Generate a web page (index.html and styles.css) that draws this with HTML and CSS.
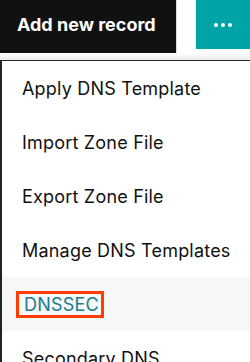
FILE: index.html
```html
<!DOCTYPE html>
<html lang="en">
<head>
    <meta charset="UTF-8">
    <meta name="viewport" content="width=device-width, initial-scale=1.0">
    <title>DNS Records</title>
    <link rel="stylesheet" href="styles.css">
</head>
<body>
    <div class="toolbar">
        <button class="btn-add">Add new record</button>
        <button class="btn-more" aria-label="More">
            <span class="dot"></span><span class="dot"></span><span class="dot"></span>
        </button>
    </div>
    <div class="toolbar-shadow"></div>
    <ul class="menu">
        <li class="menu-item">Apply DNS Template</li>
        <li class="menu-item">Import Zone File</li>
        <li class="menu-item">Export Zone File</li>
        <li class="menu-item">Manage DNS Templates</li>
        <li class="menu-item active"><span class="highlight">DNSSEC</span></li>
        <li class="menu-item">Secondary DNS</li>
    </ul>
</body>
</html>
```

FILE: styles.css
```css
body {
    font-family: Inter, 'Noto Sans', sans-serif;
    margin: 0;
    padding: 0;
    background-color: #fff;
    color: #111;
    overflow: hidden;
}
.toolbar {
    display: flex;
    align-items: flex-start;
    gap: 19px;
    height: 53px;
}
.btn-add {
    width: 177px;
    height: 53px;
    background-color: #111;
    color: #fff;
    border: none;
    border-right: 1px solid #ddd;
    font-family: inherit;
    font-size: 18px;
    font-weight: 700;
    text-align: left;
    padding: 0 0 4px 17px;
}
.btn-more {
    width: 54px;
    height: 49px;
    background-color: #00a4a6;
    border: none;
    display: flex;
    justify-content: center;
    align-items: center;
    gap: 3px;
    padding: 0;
}
.dot {
    width: 4px;
    height: 4px;
    border-radius: 50%;
    background-color: #fff;
}
.toolbar-shadow {
    height: 7px;
    background: linear-gradient(#fff, #ececec);
}
.menu {
    list-style: none;
    margin: 0;
    padding: 0;
    border-top: 1px solid #222;
    border-left: 2px solid #222;
    width: 300px;
}
.menu-item {
    height: 54px;
    display: flex;
    align-items: center;
    padding-left: 20px;
    font-size: 18px;
    letter-spacing: 0.2px;
    color: #111;
}
.menu-item.active {
    background-color: #f5f7f8;
}
.highlight {
    color: #1b7c8e;
    border: 3px solid #ff3d00;
    padding: 1px 2px 1px 5px;
    margin-left: -6px;
    line-height: 19px;
}
```
